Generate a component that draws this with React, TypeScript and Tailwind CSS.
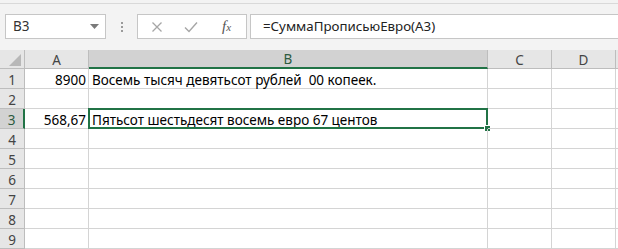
import React from 'react';

const cols = ['A', 'B', 'C', 'D', ''];
const rows = [1, 2, 3, 4, 5, 6, 7, 8, 9];

const cellText: Record<string, { v: string; right?: boolean }> = {
  A1: { v: '8900', right: true },
  B1: { v: 'Восемь тысяч девятьсот рублей  00 копеек.' },
  A3: { v: '568,67', right: true },
  B3: { v: 'Пятьсот шестьдесят восемь евро 67 центов' },
};

const font = { fontFamily: '"Noto Sans", "Open Sans", Arial, sans-serif' };

export default function App() {
  return (
    <div
      className="w-[618px] h-[249px] overflow-hidden bg-[#f3f3f3] text-[#222] relative"
      style={font}
    >
      {/* край ленты сверху */}
      <div className="h-[4px] border-b border-[#d9d9d9] bg-[#f3f3f3]" />

      {/* строка формул */}
      <div className="flex items-center h-[25px] mt-[10px]">
        <div className="ml-[5px] w-[101px] h-[25px] bg-white border border-[#c6c6c6] flex items-center justify-between pl-[7px] pr-[6px]">
          <span className="text-[13.5px] text-[#333]">B3</span>
          <svg width="9" height="6" viewBox="0 0 9 6">
            <path d="M0 0 L9 0 L4.5 5 Z" fill="#7a7a7a" />
          </svg>
        </div>
        <div className="w-[31px] flex flex-col items-center gap-[2px]">
          <span className="w-[2px] h-[2px] bg-[#9a9a9a]" />
          <span className="w-[2px] h-[2px] bg-[#9a9a9a]" />
          <span className="w-[2px] h-[2px] bg-[#9a9a9a]" />
        </div>
        <div className="w-[110px] h-[25px] bg-white border border-[#c6c6c6] flex items-center">
          <svg width="12" height="12" viewBox="0 0 12 12" className="ml-[13px]">
            <path d="M1.5 1.5 L10.5 10.5 M10.5 1.5 L1.5 10.5" stroke="#a6a6a6" strokeWidth="1.3" />
          </svg>
          <svg width="14" height="12" viewBox="0 0 14 12" className="ml-[21px]">
            <path d="M1 6.5 L5 10.5 L13 1.5" stroke="#a6a6a6" strokeWidth="1.4" fill="none" />
          </svg>
          <span
            className="ml-[24px] text-[15px] italic text-[#555] leading-none"
            style={{ fontFamily: '"Liberation Serif", serif' }}
          >
            f<span className="text-[11px]">x</span>
          </span>
        </div>
        <div className="ml-[3px] flex-1 h-[25px] bg-white border border-[#c6c6c6] border-r-0 flex items-center pl-[12px]">
          <span className="text-[13.3px] text-[#222]">=СуммаПрописьюЕвро(А3)</span>
        </div>
      </div>

      {/* сетка листа */}
      <div className="mt-[11px] grid grid-cols-[25px_64px_399px_64px_64px_64px] bg-white">
        {/* угол */}
        <div className="h-[19px] bg-[#e6e6e6] border-r border-b border-[#bdbdbd] flex items-end justify-end pr-[3px] pb-[2px]">
          <svg width="12" height="12" viewBox="0 0 12 12">
            <path d="M12 0 L12 12 L0 12 Z" fill="#b8b8b8" />
          </svg>
        </div>
        {cols.map((c) => (
          <div
            key={c || 'e'}
            className={
              c === 'B'
                ? 'h-[19px] pt-[1px] bg-[#d2d2d2] border-r border-[#bdbdbd] border-b-2 border-b-[#217346] flex items-center justify-center text-[13.5px] leading-[14px] text-[#2d5b3f]'
                : 'h-[19px] pt-[1px] bg-[#e6e6e6] border-r border-b border-[#bdbdbd] flex items-center justify-center text-[13.5px] leading-[14px] text-[#444]'
            }
          >
            {c}
          </div>
        ))}

        {rows.map((r) => (
          <React.Fragment key={r}>
            <div
              className={
                r === 3
                  ? 'h-[20px] pb-[1px] bg-[#d2d2d2] border-b border-[#bdbdbd] border-r-2 border-r-[#217346] flex items-end justify-center text-[13.5px] leading-[14px] text-[#2d5b3f]'
                  : 'h-[20px] pb-[1px] bg-[#e6e6e6] border-r border-b border-[#bdbdbd] flex items-end justify-center text-[13.5px] leading-[14px] text-[#444]'
              }
            >
              {r}
            </div>
            {cols.map((c) => {
              const key = `${c}${r}`;
              const cell = cellText[key];
              const selected = key === 'B3';
              return (
                <div
                  key={key}
                  className={`relative h-[20px] border-r border-b border-[#d4d4d4] flex items-end pb-[1px] ${
                    cell?.right ? 'justify-end pr-[2px]' : 'pl-[3px]'
                  }`}
                >
                  {cell && (
                    <span className="text-[13.5px] leading-[14px] whitespace-pre text-black">
                      {cell.v}
                    </span>
                  )}
                  {selected && (
                    <>
                      <div className="absolute -left-[1px] -top-[1px] -right-[1px] -bottom-[1px] border-2 border-[#217346]" />
                      <div className="absolute -right-[4px] -bottom-[4px] w-[7px] h-[7px] bg-[#217346] border border-white" />
                    </>
                  )}
                </div>
              );
            })}
          </React.Fragment>
        ))}
      </div>
    </div>
  );
}
